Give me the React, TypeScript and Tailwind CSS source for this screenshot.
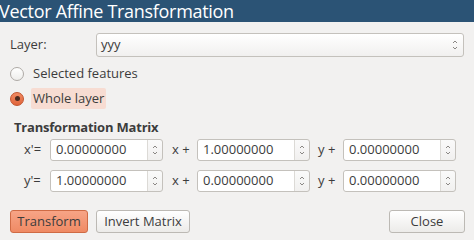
import { ReactNode } from "react";

const font = { fontFamily: '"Open Sans", "DejaVu Sans", sans-serif' };

function SpinArrows() {
  return (
    <svg width="6" height="14" viewBox="0 0 6 14" className="text-[#8a8784]">
      <path d="M1 5 L3 3 L5 5" fill="none" stroke="currentColor" strokeWidth="1" />
      <path d="M1 9 L3 11 L5 9" fill="none" stroke="currentColor" strokeWidth="1" />
    </svg>
  );
}

function SpinBox({ value }: { value: string }) {
  return (
    <div className="flex h-[22px] w-[113px] items-center rounded-[3px] border border-[#c4c1bc] bg-gradient-to-b from-[#fafafa] to-[#f1f0ef]">
      <div className="flex h-full flex-1 items-center rounded-l-[3px] border-r border-[#dcdad6] bg-white pl-[5px] text-[13px] text-[#3c3c3c]">
        {value}
      </div>
      <div className="flex w-[14px] items-center justify-center">
        <SpinArrows />
      </div>
    </div>
  );
}

function Radio({ checked, children }: { checked?: boolean; children: ReactNode }) {
  return (
    <div className="flex h-[25px] items-center pl-[10px]">
      {checked ? (
        <div className="flex h-[14px] w-[14px] items-center justify-center rounded-full border border-[#c1542e] bg-gradient-to-b from-[#f08a62] to-[#e0643a]">
          <div className="h-[5px] w-[5px] rounded-full bg-[#4a2a1e]" />
        </div>
      ) : (
        <div className="h-[14px] w-[14px] rounded-full border border-[#aeaaa6] bg-gradient-to-b from-white to-[#eeedeb]" />
      )}
      <span
        className={`ml-[7px] rounded-[2px] px-[2px] py-[1px] text-[13px] text-[#3c3c3c] ${
          checked ? "bg-[#f7dcd2]" : ""
        }`}
      >
        {children}
      </span>
    </div>
  );
}

function Button({ children, primary, className = "" }: { children: ReactNode; primary?: boolean; className?: string }) {
  return (
    <button
      className={`h-[23px] rounded-[3px] border text-[13px] text-[#3c3c3c] ${
        primary
          ? "border-[#cf6b45] bg-gradient-to-b from-[#f7a486] to-[#ef8a64]"
          : "border-[#bcb9b4] bg-gradient-to-b from-white to-[#ecebe9]"
      } ${className}`}
    >
      {children}
    </button>
  );
}

export default function App() {
  return (
    <div className="h-[240px] w-[474px] overflow-hidden bg-[#f2f1f0]" style={font}>
      {/* Title bar */}
      <div className="flex h-[22px] items-center bg-[#2b5375]">
        <span className="-ml-[1px] text-[18px] leading-none tracking-[-0.3px] text-white">
          Vector Affine Transformation
        </span>
      </div>

      {/* Layer */}
      <div className="mt-[11px] flex h-[24px] items-center">
        <span className="w-[96px] pl-[10px] text-[13px] text-[#3c3c3c]">Layer:</span>
        <div className="flex h-[24px] w-[368px] items-center justify-between rounded-[3px] border border-[#c4c1bc] bg-gradient-to-b from-white to-[#f1f0ef] pl-[4px] pr-[5px]">
          <span className="text-[13px] text-[#3c3c3c]">yyy</span>
          <SpinArrows />
        </div>
      </div>

      {/* Radios */}
      <div className="mt-[4px]">
        <Radio>Selected features</Radio>
        <Radio checked>Whole layer</Radio>
      </div>

      {/* Matrix */}
      <div className="mt-[8px] pl-[14px] text-[13px] font-bold leading-[16px] tracking-[-0.2px] text-[#3c3c3c]">
        Transformation Matrix
      </div>
      <div className="mt-[4px] flex flex-col gap-[9px] pl-[24px] text-[13px] text-[#3c3c3c]">
        {[
          ["x'=", "0.00000000", "1.00000000", "0.00000000"],
          ["y'=", "1.00000000", "0.00000000", "0.00000000"],
        ].map(([label, a, b, c]) => (
          <div key={label} className="flex items-center">
            <span className="w-[26px]">{label}</span>
            <SpinBox value={a} />
            <span className="w-[34px] pl-[9px]">x +</span>
            <SpinBox value={b} />
            <span className="w-[33px] pl-[8px]">y +</span>
            <SpinBox value={c} />
          </div>
        ))}
      </div>

      {/* Buttons */}
      <div className="mt-[18px] flex items-center px-[10px]">
        <Button primary className="w-[78px]">Transform</Button>
        <Button className="ml-[8px] w-[94px]">Invert Matrix</Button>
        <Button className="ml-auto mr-[-1px] w-[76px]">Close</Button>
      </div>
    </div>
  );
}
